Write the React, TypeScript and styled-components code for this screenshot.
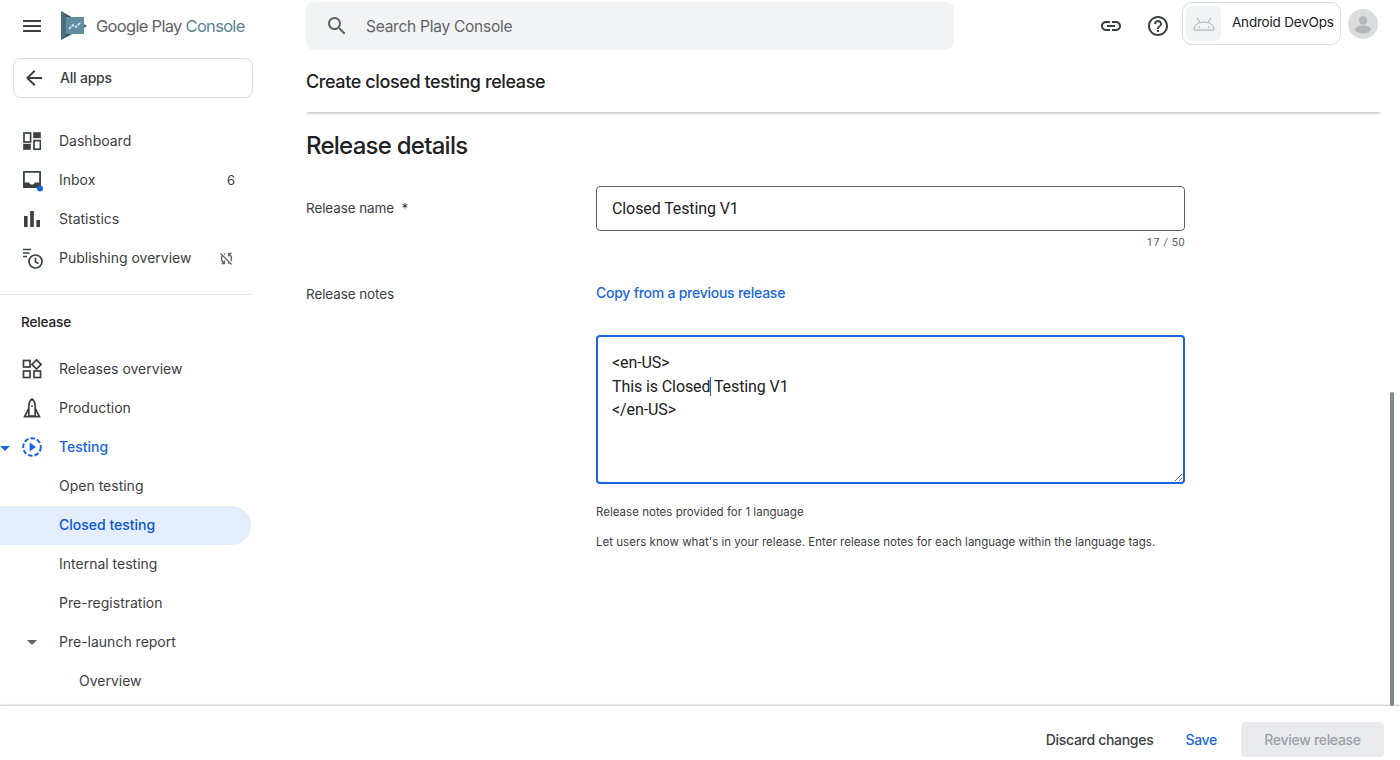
import React from "react";
import styled, { createGlobalStyle } from "styled-components";

const Global = createGlobalStyle`
  html, body { margin: 0; padding: 0; background: #fff; }
  * { box-sizing: border-box; }
  body { font-family: Inter, "Liberation Sans", sans-serif; color: #3c4043; }
`;

const Page = styled.div`
  position: relative;
  width: 1400px;
  height: 760px;
  display: flex;
  flex-direction: column;
  overflow: hidden;
`;
const Body = styled.div`
  flex: 1;
  min-height: 0;
  display: flex;
`;
const Sidebar = styled.aside`
  width: 253px;
  flex: none;
  overflow: hidden;
`;
const Brand = styled.div`
  height: 52px;
  display: flex;
  align-items: center;
`;
const Burger = styled.span`
  flex: none;
  width: 18px;
  height: 12px;
  margin-left: 23px;
  border-top: 2px solid #3c4043;
  border-bottom: 2px solid #3c4043;
  position: relative;
  &::after {
    content: "";
    position: absolute;
    left: 0;
    right: 0;
    top: 3px;
    height: 2px;
    background: #3c4043;
  }
`;
const LogoSvg = styled.svg`
  margin-left: 19px;
  flex: none;
`;
const BrandText = styled.span`
  margin-left: 8px;
  font-size: 16.5px;
  letter-spacing: -0.7px;
  color: #5f6368;
  white-space: nowrap;
`;
const BrandAccent = styled.span`
  color: #5b8296;
`;
const AllApps = styled.div`
  margin: 6px 0 0 13px;
  width: 240px;
  height: 40px;
  border: 1px solid #dadce0;
  border-radius: 8px;
  display: flex;
  align-items: center;
  padding-left: 8px;
  gap: 14px;
  font-size: 14px;
  font-weight: 500;
  letter-spacing: -0.2px;
  color: #3c4043;
`;
const AllAppsLabel = styled.span`
  padding-bottom: 2px;
`;
const NavGroup = styled.nav<{ $top: number }>`
  margin-top: ${(p) => p.$top}px;
`;
const Row = styled.div<{ $active?: boolean; $blue?: boolean; $indent?: number }>`
  position: relative;
  width: 251px;
  height: 39px;
  display: flex;
  align-items: center;
  padding-left: ${(p) => p.$indent ?? 20}px;
  padding-right: 16px;
  padding-bottom: 1px;
  font-size: 14px;
  letter-spacing: 0;
  white-space: nowrap;
  font-weight: ${(p) => (p.$active || p.$blue ? 500 : 400)};
  color: ${(p) => (p.$active ? "#0b57d0" : p.$blue ? "#1a66e0" : "#3c4043")};
  background: ${(p) => (p.$active ? "#e3edfc" : "transparent")};
  border-radius: ${(p) => (p.$active ? "0 20px 20px 0" : "0")};
`;
const IconSlot = styled.span`
  width: 24px;
  height: 24px;
  margin-right: 15px;
  flex: none;
  display: flex;
  align-items: center;
  justify-content: center;
`;
const RowLabel = styled.span`
  flex: 1;
  padding-bottom: 2px;
`;
const RowMeta = styled.span`
  display: flex;
  align-items: center;
  justify-content: flex-end;
  font-size: 13px;
`;
const Divider = styled.hr`
  border: 0;
  height: 1px;
  width: 251px;
  background: #e4e5ea;
  margin: 16px 0 0;
`;
const SectionTitle = styled.div`
  padding-left: 21px;
  margin-top: 19px;
  height: 16px;
  line-height: 16px;
  font-size: 13.5px;
  font-weight: 500;
  letter-spacing: -0.1px;
  color: #202124;
`;
const LeadCaret = styled.span`
  position: absolute;
  left: 0;
  top: 18px;
  width: 0;
  height: 0;
  border-left: 5px solid transparent;
  border-right: 5px solid transparent;
  border-top: 5px solid #1a66e0;
`;
const Caret = styled.span`
  width: 0;
  height: 0;
  border-left: 5px solid transparent;
  border-right: 5px solid transparent;
  border-top: 5px solid #5f6368;
`;
const Main = styled.main`
  flex: 1;
  min-width: 0;
  padding-left: 53px;
`;
const TopBar = styled.header`
  height: 52px;
  display: flex;
  align-items: flex-start;
  padding-top: 2px;
`;
const Search = styled.div`
  width: 648px;
  height: 48px;
  border-radius: 8px;
  background: #f1f3f4;
  display: flex;
  align-items: center;
  padding-left: 19px;
  gap: 17px;
  font-size: 15.5px;
  letter-spacing: -0.25px;
  color: #5f6368;
`;
const TopIcons = styled.div`
  margin-left: 145px;
  height: 48px;
  display: flex;
  align-items: center;
  gap: 23px;
`;
const Account = styled.div`
  margin-left: 12px;
  width: 159px;
  height: 43px;
  border: 1px solid #dadce0;
  border-radius: 10px;
  display: flex;
  align-items: center;
  padding-left: 3px;
  gap: 11px;
  font-size: 13.5px;
  letter-spacing: -0.2px;
  color: #202124;
  white-space: nowrap;
`;
const AccountName = styled.span`
  margin-bottom: 3px;
`;
const AccountThumb = styled.span`
  width: 35px;
  height: 35px;
  border-radius: 6px;
  background: #f1f3f4;
  display: flex;
  align-items: center;
  justify-content: center;
`;
const Avatar = styled.span`
  margin-left: 7px;
  margin-top: 7px;
  width: 30px;
  height: 30px;
  border-radius: 50%;
  background: #dadce0;
  overflow: hidden;
  display: block;
`;
const SubHeader = styled.div`
  height: 60px;
  width: 1075px;
  display: flex;
  align-items: center;
  padding-bottom: 2px;
  font-size: 18px;
  font-weight: 500;
  letter-spacing: -0.4px;
  color: #202124;
  box-shadow: 0 3px 2px -1px #cfd0d2;
`;
const Heading = styled.h1`
  margin: 18px 0 0;
  height: 32px;
  line-height: 32px;
  font-size: 24px;
  font-weight: 500;
  letter-spacing: -0.75px;
  color: #202124;
`;
const FormRow = styled.div<{ $top: number }>`
  display: grid;
  grid-template-columns: 290px 589px;
  margin-top: ${(p) => p.$top}px;
`;
const Label = styled.div<{ $h?: number }>`
  font-size: 13.5px;
  letter-spacing: -0.1px;
  line-height: ${(p) => p.$h ?? 20}px;
  color: #3c4043;
`;
const Field = styled.div`
  height: 45px;
  border: 1px solid #5f6368;
  border-radius: 4px;
  display: flex;
  align-items: center;
  padding-left: 15px;
  font-family: Roboto, sans-serif;
  font-size: 16px;
  letter-spacing: -0.1px;
  color: #202124;
`;
const Counter = styled.div`
  margin-top: 4px;
  text-align: right;
  font-family: Roboto, sans-serif;
  font-size: 11.5px;
  line-height: 14px;
  letter-spacing: 0.3px;
  color: #5f6368;
`;
const LinkText = styled.a`
  display: block;
  font-size: 14px;
  font-weight: 500;
  letter-spacing: -0.25px;
  line-height: 20px;
  margin-top: -1px;
  color: #1a66e0;
`;
const Notes = styled.div`
  position: relative;
  margin-top: 32px;
  height: 149px;
  border: 2px solid #1a66e0;
  border-radius: 4px;
  padding: 14px 14px;
  font-family: Roboto, sans-serif;
  font-size: 16px;
  line-height: 23.5px;
  letter-spacing: -0.1px;
  color: #202124;
`;
const CaretMark = styled.span`
  display: inline-block;
  width: 1px;
  height: 19px;
  margin: 0 -1px 0 0;
  vertical-align: -4px;
  background: #1a66e0;
`;
const Grip = styled.svg`
  position: absolute;
  right: 0;
  bottom: 0;
`;
const Hint = styled.div<{ $top: number }>`
  margin-top: ${(p) => p.$top}px;
  font-size: 11.5px;
  line-height: 16px;
  letter-spacing: 0.02px;
  color: #3c4043;
  white-space: nowrap;
`;
const Footer = styled.footer`
  height: 54px;
  flex: none;
  display: flex;
  align-items: center;
  justify-content: flex-end;
  padding: 13px 16px 0 0;
  box-shadow: 0 -1px 2px #c4c5c7;
  background: #fff;
  position: relative;
  font-size: 14px;
  font-weight: 500;
  letter-spacing: -0.3px;
`;
const TextButton = styled.span<{ $blue?: boolean }>`
  color: ${(p) => (p.$blue ? "#1a66e0" : "#3c4043")};
  margin-right: ${(p) => (p.$blue ? 24 : 32)}px;
`;
const Disabled = styled.span`
  width: 143px;
  height: 35px;
  border-radius: 4px;
  background: #e8eaed;
  color: #9aa0a6;
  display: flex;
  align-items: center;
  justify-content: center;
`;
const Thumb = styled.div`
  position: absolute;
  right: 6px;
  top: 392px;
  width: 4px;
  height: 314px;
  border-radius: 2px;
  background: #80868b;
`;

const Ic = ({ d, size = 24, color = "#3c4043" }: { d: string; size?: number; color?: string }) => (
  <svg width={size} height={size} viewBox="0 0 24 24" fill={color}>
    <path d={d} />
  </svg>
);

const Logo = () => (
  <LogoSvg width="28" height="30" viewBox="0 0 28 30">
    <polygon points="1,0 27,15 1,29" fill="#37545f" />
    <polygon points="1,0 6,4 6,25 1,29" fill="#4d6f7f" />
    <polygon points="6,6 24,6 24,23 6,23" fill="#5f8ea3" />
    <polyline points="9,18 13,14 16,16 21,11" fill="none" stroke="#dfe9ee" strokeWidth="1.6" strokeDasharray="3 1" />
  </LogoSvg>
);

const DashIcon = () => (
  <svg width="18" height="18" viewBox="0 0 18 18">
    <rect x="1" y="1" width="6.6" height="9" fill="none" stroke="#3c4043" strokeWidth="1.7" />
    <rect x="10.2" y="0.2" width="7.6" height="6" fill="#3c4043" />
    <rect x="0.2" y="11.8" width="7.6" height="6" fill="#3c4043" />
    <rect x="11" y="8.6" width="6.4" height="8.6" fill="none" stroke="#3c4043" strokeWidth="1.7" />
  </svg>
);
const InboxIcon = () => (
  <svg width="24" height="24" viewBox="0 0 24 24">
    <path d="M4 3h16c.6 0 1 .4 1 1v15c0 .6-.4 1-1 1H4c-.6 0-1-.4-1-1V4c0-.6.4-1 1-1zm.8 1.8v9.6h4.4c.4 1.3 1.5 2.2 2.8 2.2s2.4-.9 2.8-2.2h4.4V4.8H4.8z" fill="#3c4043" />
    <circle cx="20" cy="20.5" r="3" fill="#1a66e0" />
  </svg>
);
const StatsIcon = () => (
  <svg width="18" height="16" viewBox="0 0 18 16">
    <rect x="1" y="5" width="3.6" height="11" fill="#3c4043" />
    <rect x="7.2" y="0" width="3.6" height="16" fill="#3c4043" />
    <rect x="13.4" y="9" width="3.6" height="7" fill="#3c4043" />
  </svg>
);
const PublishIcon = () => (
  <svg width="24" height="24" viewBox="0 0 24 24" fill="none" stroke="#3c4043" strokeWidth="1.7">
    <path d="M3 3.5h8M3 7h6.5M3 10.5h4" />
    <circle cx="15.5" cy="15.5" r="6.5" />
    <path d="M15.5 11.8v4.2l3 1.6" />
  </svg>
);
const ReleasesIcon = () => (
  <svg width="20" height="20" viewBox="0 0 20 20" fill="none" stroke="#3c4043" strokeWidth="1.7">
    <rect x="1.5" y="1.5" width="6.5" height="6.5" />
    <path d="M14.5 0.8l4.6 4.6-4.6 4.6-4.6-4.6z" />
    <rect x="1.5" y="12" width="6.5" height="6.5" />
    <rect x="12" y="12" width="6.5" height="6.5" />
  </svg>
);
const ProductionIcon = () => (
  <svg width="18" height="20" viewBox="0 0 18 20" fill="none" stroke="#3c4043" strokeWidth="1.7">
    <path d="M9 1c2.4 2 3.2 4.6 3.2 7.2V18H5.8V8.2C5.8 5.6 6.6 3 9 1z" />
    <path d="M5.8 10.5L1.6 18.6h14.8L12.2 10.5" />
    <circle cx="9" cy="8" r="0.9" fill="#3c4043" stroke="none" />
  </svg>
);
const TestingIcon = () => (
  <svg width="20" height="20" viewBox="0 0 20 20">
    <circle cx="10" cy="10" r="8.8" fill="none" stroke="#1a66e0" strokeWidth="2" strokeDasharray="4.6 2" />
    <polygon points="7.6,5.6 14,10 7.6,14.4" fill="#1a66e0" />
  </svg>
);
const AndroidIcon = () => (
  <svg width="22" height="14" viewBox="0 0 22 14" fill="none" stroke="#a8abaf" strokeWidth="1">
    <path d="M1 13c0-4.6 4.4-8 10-8s10 3.4 10 8z" />
    <path d="M4 .8l3 5M18 .8l-3 5" />
    <circle cx="6.5" cy="10" r=".7" fill="#a8abaf" stroke="none" />
    <circle cx="15.5" cy="10" r=".7" fill="#a8abaf" stroke="none" />
  </svg>
);
const AvatarArt = () => (
  <svg width="30" height="30" viewBox="0 0 30 30">
    <circle cx="15" cy="11.5" r="4.2" fill="#b4b6b9" />
    <ellipse cx="15" cy="20.5" rx="8" ry="4" fill="#b4b6b9" />
  </svg>
);

const ARROW = "M20 11H7.83l5.59-5.59L12 4l-8 8 8 8 1.41-1.41L7.83 13H20v-2z";
const SEARCH = "M15.5 14h-.79l-.28-.27C15.41 12.59 16 11.11 16 9.5 16 5.91 13.09 3 9.5 3S3 5.91 3 9.5 5.91 16 9.5 16c1.61 0 3.09-.59 4.23-1.57l.27.28v.79l5 4.99L20.49 19l-4.99-5zm-6 0C7.01 14 5 11.99 5 9.5S7.01 5 9.5 5 14 7.01 14 9.5 11.99 14 9.5 14z";
const LINK = "M3.9 12c0-1.71 1.39-3.1 3.1-3.1h4V7H7c-2.76 0-5 2.24-5 5s2.24 5 5 5h4v-1.9H7c-1.71 0-3.1-1.39-3.1-3.1zM8 13h8v-2H8v2zm9-6h-4v1.9h4c1.71 0 3.1 1.39 3.1 3.1s-1.39 3.1-3.1 3.1h-4V17h4c2.76 0 5-2.24 5-5s-2.24-5-5-5z";
const HELP = "M11 18h2v-2h-2v2zm1-16C6.48 2 2 6.48 2 12s4.48 10 10 10 10-4.48 10-10S17.52 2 12 2zm0 18c-4.41 0-8-3.59-8-8s3.59-8 8-8 8 3.59 8 8-3.59 8-8 8zm0-14c-2.21 0-4 1.79-4 4h2c0-1.1.9-2 2-2s2 .9 2 2c0 2-3 1.75-3 5h2c0-2.25 3-2.5 3-5 0-2.21-1.79-4-4-4z";
const SYNC_OFF = "M10 6.35V4.26c-.8.21-1.55.54-2.23.96l1.46 1.46c.25-.12.5-.24.77-.33zm-7.14-.94l2.36 2.36C4.45 8.99 4 10.44 4 12c0 2.21.91 4.2 2.36 5.64L4 20h6v-6l-2.24 2.24C6.68 15.15 6 13.66 6 12c0-1 .25-1.94.68-2.77l8.08 8.08c-.25.13-.5.25-.77.34v2.09c.8-.21 1.55-.54 2.23-.96l2.36 2.36 1.27-1.27L4.14 4.14 2.86 5.41zM20 4h-6v6l2.24-2.24C17.32 8.85 18 10.34 18 12c0 1-.25 1.94-.68 2.77l1.46 1.46C19.55 15.01 20 13.56 20 12c0-2.21-.91-4.2-2.36-5.64L20 4z";

export default function App() {
  return (
    <Page>
      <Global />
      <Body>
        <Sidebar>
          <Brand>
            <Burger />
            <Logo />
            <BrandText>
              Google Play <BrandAccent>Console</BrandAccent>
            </BrandText>
          </Brand>
          <AllApps>
            <Ic d={ARROW} />
            <AllAppsLabel>All apps</AllAppsLabel>
          </AllApps>
          <NavGroup $top={24}>
            <Row><IconSlot><DashIcon /></IconSlot><RowLabel>Dashboard</RowLabel></Row>
            <Row><IconSlot><InboxIcon /></IconSlot><RowLabel>Inbox</RowLabel><RowMeta>6</RowMeta></Row>
            <Row><IconSlot><StatsIcon /></IconSlot><RowLabel>Statistics</RowLabel></Row>
            <Row>
              <IconSlot><PublishIcon /></IconSlot>
              <RowLabel>Publishing overview</RowLabel>
              <RowMeta><Ic d={SYNC_OFF} size={17} color="#5f6368" /></RowMeta>
            </Row>
          </NavGroup>
          <Divider />
          <SectionTitle>Release</SectionTitle>
          <NavGroup $top={20}>
            <Row><IconSlot><ReleasesIcon /></IconSlot><RowLabel>Releases overview</RowLabel></Row>
            <Row><IconSlot><ProductionIcon /></IconSlot><RowLabel>Production</RowLabel></Row>
            <Row $blue><LeadCaret /><IconSlot><TestingIcon /></IconSlot><RowLabel>Testing</RowLabel></Row>
            <Row $indent={59}><RowLabel>Open testing</RowLabel></Row>
            <Row $indent={59} $active><RowLabel>Closed testing</RowLabel></Row>
            <Row $indent={59}><RowLabel>Internal testing</RowLabel></Row>
            <Row $indent={59}><RowLabel>Pre-registration</RowLabel></Row>
            <Row><IconSlot><Caret /></IconSlot><RowLabel>Pre-launch report</RowLabel></Row>
            <Row $indent={79}><RowLabel>Overview</RowLabel></Row>
          </NavGroup>
        </Sidebar>
        <Main>
          <TopBar>
            <Search>
              <Ic d={SEARCH} color="#5f6368" />
              Search Play Console
            </Search>
            <TopIcons>
              <Ic d={LINK} color="#3c4043" />
              <Ic d={HELP} color="#3c4043" />
            </TopIcons>
            <Account>
              <AccountThumb><AndroidIcon /></AccountThumb>
              <AccountName>Android DevOps</AccountName>
            </Account>
            <Avatar><AvatarArt /></Avatar>
          </TopBar>
          <SubHeader>Create closed testing release</SubHeader>
          <Heading>Release details</Heading>
          <FormRow $top={24}>
            <Label $h={45}>Release name&nbsp; *</Label>
            <div>
              <Field>Closed Testing V1</Field>
              <Counter>17 / 50</Counter>
            </div>
          </FormRow>
          <FormRow $top={35}>
            <Label>Release notes</Label>
            <div>
              <LinkText>Copy from a previous release</LinkText>
              <Notes>
                &lt;en-US&gt;
                <br />
                This is Closed<CaretMark /> Testing V1
                <br />
                &lt;/en-US&gt;
                <Grip width="10" height="10" viewBox="0 0 10 10" fill="none" stroke="#70757a" strokeWidth="1">
                  <path d="M9 2L2 9M9 6L6 9" />
                </Grip>
              </Notes>
              <Hint $top={20}>Release notes provided for 1 language</Hint>
              <Hint $top={14}>Let users know what's in your release. Enter release notes for each language within the language tags.</Hint>
            </div>
          </FormRow>
        </Main>
      </Body>
      <Footer>
        <TextButton>Discard changes</TextButton>
        <TextButton $blue>Save</TextButton>
        <Disabled>Review release</Disabled>
      </Footer>
      <Thumb />
    </Page>
  );
}
